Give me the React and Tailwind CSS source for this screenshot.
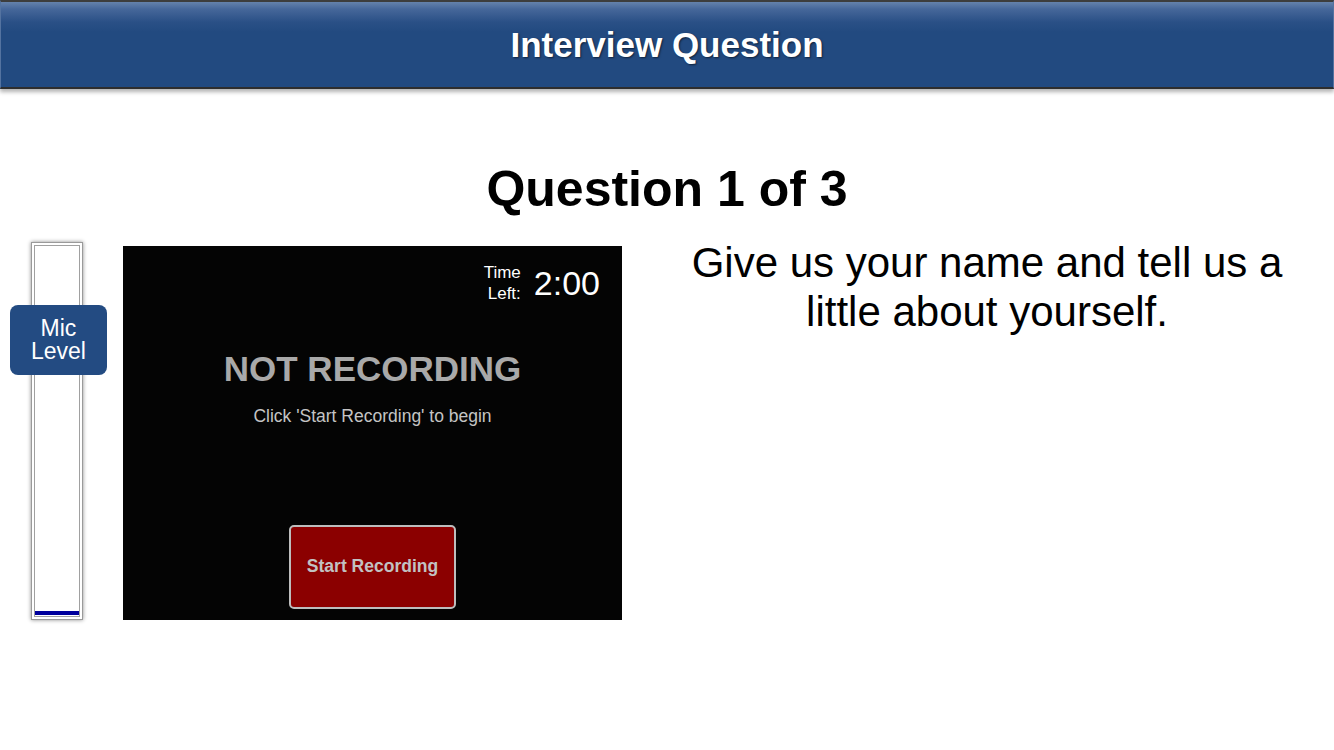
import React from 'react';

const font = { fontFamily: '"Liberation Sans", Arial, sans-serif' };

const MicLevel = ({ level = 4 }) => {
  return (
    <div className="relative shrink-0">
      <div className="w-[52px] h-[378px] bg-white border border-[#9a9a9a] p-[2px] shadow-[0_0_4px_rgba(0,0,0,0.45)]">
        <div className="h-full border border-[#a0a0a0] flex flex-col justify-end">
          <div className="bg-[#00009c] mb-[1px]" style={{ height: level }} />
        </div>
      </div>
      <div className="absolute left-[-21px] top-[63px] w-[97px] h-[70px] rounded-[8px] bg-[#234b82] text-white text-[23px] leading-[23px] flex items-center justify-center text-center">
        <p>
          Mic
          <br />
          Level
        </p>
      </div>
    </div>
  );
};

const Recorder = () => {
  return (
    <div className="mt-[4px] w-[499px] h-[374px] bg-[#040404] flex flex-col items-center shrink-0">
      <div className="self-end flex items-center gap-[13px] pt-[16px] pr-[22px]">
        <div className="text-white text-[17px] leading-[21px] text-right">
          <div>Time</div>
          <div>Left:</div>
        </div>
        <div className="text-white text-[34px] leading-none">2:00</div>
      </div>
      <div className="mt-[45px] text-[#a9a9a9] font-bold text-[35px] leading-[40px]">NOT RECORDING</div>
      <div className="mt-[16px] text-[#c4c4c4] text-[17.5px] leading-[22px]">Click 'Start Recording' to begin</div>
      <button className="mt-[98px] w-[167px] h-[84px] rounded-[5px] border-2 border-[#bdbdbd] bg-[#8b0000] text-[#c2c2c2] font-bold text-[17.5px]">
        Start Recording
      </button>
    </div>
  );
};

export default function App() {
  return (
    <div className="min-h-screen bg-white" style={font}>
      <header className="h-[89px] border-t-2 border-t-[#3d3d3d] border-b-2 border-b-[#2e2e2e] border-x border-x-[#5473a0] bg-[linear-gradient(to_bottom,#6582ac_0px,#46679a_7px,#2a5086_20px,#224a80_30px,#224a80_100%)] shadow-[0_3px_4px_rgba(0,0,0,0.3)] flex items-center justify-center">
        <h1 className="text-white font-bold text-[35px] leading-none [text-shadow:1px_1px_2px_rgba(0,0,0,0.55)]">
          Interview Question
        </h1>
      </header>

      <h2 className="mt-[72px] text-center font-bold text-[50px] leading-[1.15] text-black">Question 1 of 3</h2>

      <div className="mt-[23px] flex items-start pl-[31px]">
        <MicLevel />
        <div className="ml-[40px]">
          <Recorder />
        </div>
        <div className="flex-1 ml-[30px] mr-[12px] -mt-[4px] text-center text-[42px] leading-[49px] text-black">
          Give us your name and tell us a little about yourself.
        </div>
      </div>
    </div>
  );
}
